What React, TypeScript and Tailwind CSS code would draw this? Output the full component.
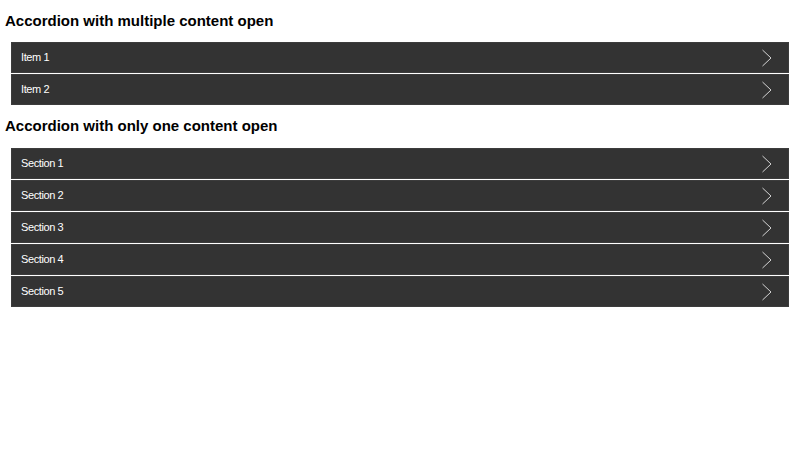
import React, { useState } from 'react';

const Chevron = () => (
  <svg width="12" height="18" viewBox="0 0 12 18" className="shrink-0">
    <path d="M1.5 1 L10 9 L1.5 17" fill="none" stroke="#d4d4d4" strokeWidth="1" />
  </svg>
);

function Accordion({ items }: { items: string[] }) {
  const [open, setOpen] = useState<number[]>([]);
  return (
    <div className="mx-[11px] flex flex-col gap-px bg-white">
      {items.map((label, i) => (
        <button
          key={label}
          onClick={() => setOpen(prev => (prev.includes(i) ? prev.filter(x => x !== i) : [...prev, i]))}
          className="flex h-[31px] items-center justify-between border border-[#3c3c3c] bg-[#333333] pl-[9px] pr-[15px] text-left text-[11px] tracking-[-0.4px] text-white"
        >
          <span>{label}</span>
          <Chevron />
        </button>
      ))}
    </div>
  );
}

export default function App() {
  return (
    <div className="min-h-[450px] w-full bg-white pt-[11px] text-black" style={{ fontFamily: '"Liberation Sans", Arial, sans-serif' }}>
      <h2 className="mx-[5px] mb-[11px] text-[15px] font-bold leading-[20px]">Accordion with multiple content open</h2>
      <Accordion items={['Item 1', 'Item 2']} />
      <h2 className="mx-[5px] mb-[12px] mt-[11px] text-[15px] font-bold leading-[20px]">Accordion with only one content open</h2>
      <Accordion items={['Section 1', 'Section 2', 'Section 3', 'Section 4', 'Section 5']} />
    </div>
  );
}
